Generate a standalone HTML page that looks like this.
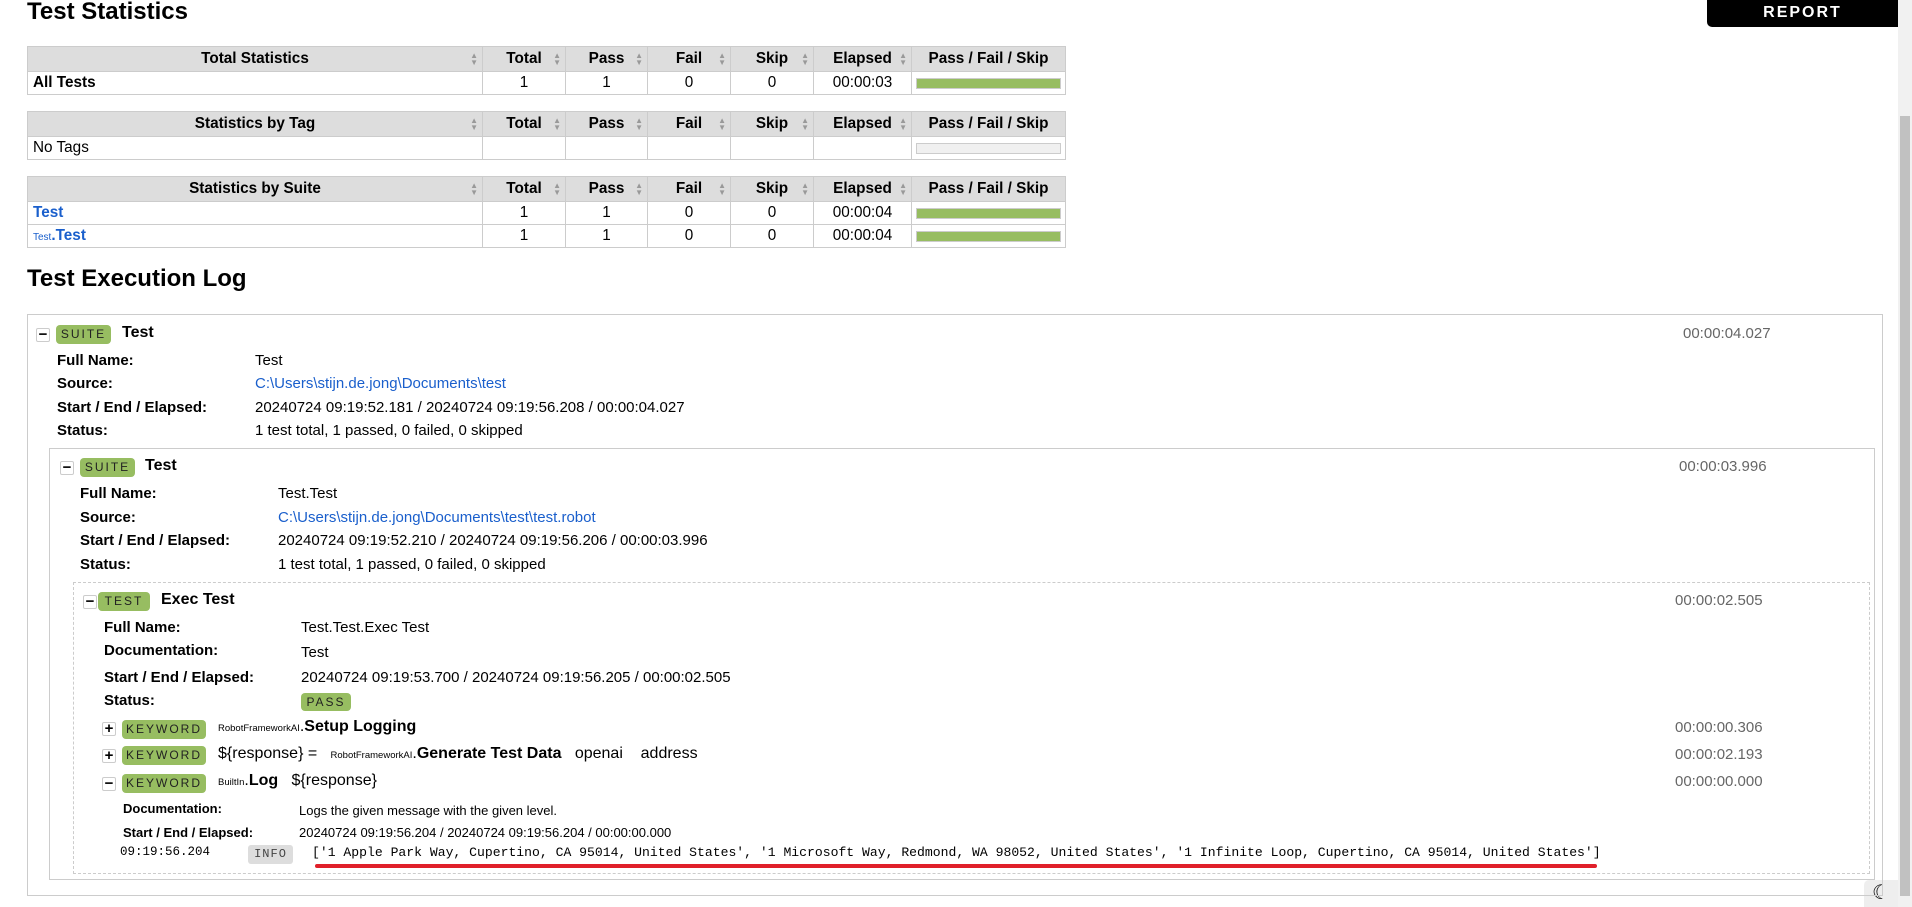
<!DOCTYPE html>
<html><head><meta charset="utf-8"><style>
*{box-sizing:border-box;margin:0;padding:0}
html,body{width:1912px;height:907px;overflow:hidden;background:#fff;font-family:"Liberation Sans",Arial,sans-serif;color:#000;font-size:15px}
.a{position:absolute;white-space:nowrap}
h1,h2{position:absolute;left:27px;font-size:24px;font-weight:bold}
table{position:absolute;left:27px;width:1039px;border-collapse:collapse;font-size:15.3px}
th{background:#ddd;border:1px solid #ccc;height:25px;font-weight:bold;position:relative}
td{border:1px solid #ccc;height:23px;text-align:center}
td:first-child{text-align:left;padding-left:5px}
th .s{position:absolute;right:4px;top:5px;color:#999;font-size:8px;line-height:7px}
.bar{display:block;margin:0 auto;width:145px;height:11px;background:#97bd61;border:1px solid #ccc}
.bar.e{background:#f0f0f0}
a,.lk{color:#1a5fcc;text-decoration:none}
.box{position:absolute;border:1px solid #ccc}
.tg{position:absolute;width:14px;height:14px;border:1px solid #ccc;border-radius:2px;font-weight:bold;font-size:15px;line-height:11px;text-align:center}
.bd{position:absolute;background:#97bd61;border-radius:4px;height:19px;font-size:12px;letter-spacing:2px;line-height:19px;text-align:center;color:#222}
.lb{font-weight:bold}
.el{color:#666}
.sm{font-size:9.5px}
.kw{font-size:16px}
.mono{font-family:"Liberation Mono",monospace;font-size:13.1px}
</style></head><body>
<h1 style="top:-2px">Test Statistics</h1>
<div class="a" style="left:1707px;top:0;width:191px;height:27px;background:#000;border-bottom-left-radius:5px;color:#fff;font-weight:bold;font-size:16px;letter-spacing:2px;text-align:center;line-height:26px">REPORT</div>
<div class="a" style="left:1898px;top:0;width:14px;height:907px;background:#f1f1f1"></div>
<div class="a" style="left:1900px;top:116px;width:10px;height:780px;background:#c1c1c1"></div>
<div class="a" style="left:1864px;top:880px;width:34px;height:27px;background:#eee;border-radius:5px 0 0 0;font-size:20px;line-height:27px;text-align:center">&#9790;</div>

<table style="top:46px"><colgroup><col style="width:455px"><col style="width:83px"><col style="width:82px"><col style="width:83px"><col style="width:83px"><col style="width:98px"><col></colgroup>
<tr><th>Total Statistics<span class="s">▲<br>▼</span></th><th>Total<span class="s">▲<br>▼</span></th><th>Pass<span class="s">▲<br>▼</span></th><th>Fail<span class="s">▲<br>▼</span></th><th>Skip<span class="s">▲<br>▼</span></th><th>Elapsed<span class="s">▲<br>▼</span></th><th>Pass / Fail / Skip</th></tr>
<tr><td><b>All Tests</b></td><td>1</td><td>1</td><td>0</td><td>0</td><td>00:00:03</td><td><span class="bar"></span></td></tr></table>

<table style="top:111px"><colgroup><col style="width:455px"><col style="width:83px"><col style="width:82px"><col style="width:83px"><col style="width:83px"><col style="width:98px"><col></colgroup>
<tr><th>Statistics by Tag<span class="s">▲<br>▼</span></th><th>Total<span class="s">▲<br>▼</span></th><th>Pass<span class="s">▲<br>▼</span></th><th>Fail<span class="s">▲<br>▼</span></th><th>Skip<span class="s">▲<br>▼</span></th><th>Elapsed<span class="s">▲<br>▼</span></th><th>Pass / Fail / Skip</th></tr>
<tr><td>No Tags</td><td></td><td></td><td></td><td></td><td></td><td><span class="bar e"></span></td></tr></table>

<table style="top:176px"><colgroup><col style="width:455px"><col style="width:83px"><col style="width:82px"><col style="width:83px"><col style="width:83px"><col style="width:98px"><col></colgroup>
<tr><th>Statistics by Suite<span class="s">▲<br>▼</span></th><th>Total<span class="s">▲<br>▼</span></th><th>Pass<span class="s">▲<br>▼</span></th><th>Fail<span class="s">▲<br>▼</span></th><th>Skip<span class="s">▲<br>▼</span></th><th>Elapsed<span class="s">▲<br>▼</span></th><th>Pass / Fail / Skip</th></tr>
<tr><td><b class="lk">Test</b></td><td>1</td><td>1</td><td>0</td><td>0</td><td>00:00:04</td><td><span class="bar"></span></td></tr>
<tr><td><span class="lk" style="font-size:10px">Test</span><b class="lk">.Test</b></td><td>1</td><td>1</td><td>0</td><td>0</td><td>00:00:04</td><td><span class="bar"></span></td></tr></table>

<h2 style="top:265px">Test Execution Log</h2>

<div class="box" style="left:27px;top:314px;width:1856px;height:582px"></div>
<div class="tg" style="left:36px;top:328px">−</div>
<div class="bd" style="left:56px;top:325px;width:55px">SUITE</div>
<div class="a lb" style="left:122px;top:324px;font-size:16px">Test</div>
<div class="a el" style="left:1683px;top:325px">00:00:04.027</div>
<div class="a lb" style="left:57px;top:352px">Full Name:</div><div class="a" style="left:255px;top:352px">Test</div>
<div class="a lb" style="left:57px;top:375px">Source:</div><div class="a lk" style="left:255px;top:375px">C:\Users\stijn.de.jong\Documents\test</div>
<div class="a lb" style="left:57px;top:399px">Start / End / Elapsed:</div><div class="a" style="left:255px;top:399px">20240724 09:19:52.181 / 20240724 09:19:56.208 / 00:00:04.027</div>
<div class="a lb" style="left:57px;top:422px">Status:</div><div class="a" style="left:255px;top:422px">1 test total, 1 passed, 0 failed, 0 skipped</div>

<div class="box" style="left:49px;top:448px;width:1826px;height:432px"></div>
<div class="tg" style="left:60px;top:461px">−</div>
<div class="bd" style="left:80px;top:458px;width:55px">SUITE</div>
<div class="a lb" style="left:145px;top:457px;font-size:16px">Test</div>
<div class="a el" style="left:1679px;top:458px">00:00:03.996</div>
<div class="a lb" style="left:80px;top:485px">Full Name:</div><div class="a" style="left:278px;top:485px">Test.Test</div>
<div class="a lb" style="left:80px;top:509px">Source:</div><div class="a lk" style="left:278px;top:509px">C:\Users\stijn.de.jong\Documents\test\test.robot</div>
<div class="a lb" style="left:80px;top:532px">Start / End / Elapsed:</div><div class="a" style="left:278px;top:532px">20240724 09:19:52.210 / 20240724 09:19:56.206 / 00:00:03.996</div>
<div class="a lb" style="left:80px;top:556px">Status:</div><div class="a" style="left:278px;top:556px">1 test total, 1 passed, 0 failed, 0 skipped</div>

<div class="box" style="left:73px;top:582px;width:1797px;height:292px;border:1px dashed #ccc"></div>
<div class="tg" style="left:83px;top:595px">−</div>
<div class="bd" style="left:98px;top:592px;width:52px">TEST</div>
<div class="a lb" style="left:161px;top:591px;font-size:16px">Exec Test</div>
<div class="a el" style="left:1675px;top:592px">00:00:02.505</div>
<div class="a lb" style="left:104px;top:619px">Full Name:</div><div class="a" style="left:301px;top:619px">Test.Test.Exec Test</div>
<div class="a lb" style="left:104px;top:642px">Documentation:</div><div class="a" style="left:301px;top:644px">Test</div>
<div class="a lb" style="left:104px;top:669px">Start / End / Elapsed:</div><div class="a" style="left:301px;top:669px">20240724 09:19:53.700 / 20240724 09:19:56.205 / 00:00:02.505</div>
<div class="a lb" style="left:104px;top:692px">Status:</div>
<div class="bd" style="left:301px;top:693px;width:50px;height:18px;line-height:18px">PASS</div>

<div class="tg" style="left:102px;top:722px">+</div>
<div class="bd" style="left:122px;top:720px;width:84px">KEYWORD</div>
<div class="a kw" style="left:218px;top:718px"><span class="sm">RobotFrameworkAI</span>.<b>Setup Logging</b></div>
<div class="a el" style="left:1675px;top:719px">00:00:00.306</div>

<div class="tg" style="left:102px;top:749px">+</div>
<div class="bd" style="left:122px;top:746px;width:84px">KEYWORD</div>
<div class="a kw" style="left:218px;top:745px">${response} = &nbsp; <span class="sm">RobotFrameworkAI</span>.<b>Generate Test Data</b> &nbsp; openai &nbsp;&nbsp; address</div>
<div class="a el" style="left:1675px;top:746px">00:00:02.193</div>

<div class="tg" style="left:102px;top:777px">−</div>
<div class="bd" style="left:122px;top:774px;width:84px">KEYWORD</div>
<div class="a kw" style="left:218px;top:772px"><span class="sm">BuiltIn</span>.<b>Log</b> &nbsp; ${response}</div>
<div class="a el" style="left:1675px;top:773px">00:00:00.000</div>

<div class="a lb" style="left:123px;top:801px;font-size:13px">Documentation:</div><div class="a" style="left:299px;top:803px;font-size:13px">Logs the given message with the given level.</div>
<div class="a lb" style="left:123px;top:825px;font-size:13px">Start / End / Elapsed:</div><div class="a" style="left:299px;top:825px;font-size:13px">20240724 09:19:56.204 / 20240724 09:19:56.204 / 00:00:00.000</div>
<div class="a mono" style="left:120px;top:845px;font-size:12.5px">09:19:56.204</div>
<div class="a" style="left:248px;top:845px;width:45px;height:19px;background:#ddd;border-radius:3px;font-family:'Liberation Mono',monospace;font-size:12px;line-height:19px;text-align:center;letter-spacing:1px;color:#444">INFO</div>
<div class="a mono" style="left:312px;top:845px">['1 Apple Park Way, Cupertino, CA 95014, United States', '1 Microsoft Way, Redmond, WA 98052, United States', '1 Infinite Loop, Cupertino, CA 95014, United States']</div>
<div class="a" style="left:315px;top:864px;width:1282px;height:4px;background:#e0202a;border-radius:2px"></div>
</body></html>
